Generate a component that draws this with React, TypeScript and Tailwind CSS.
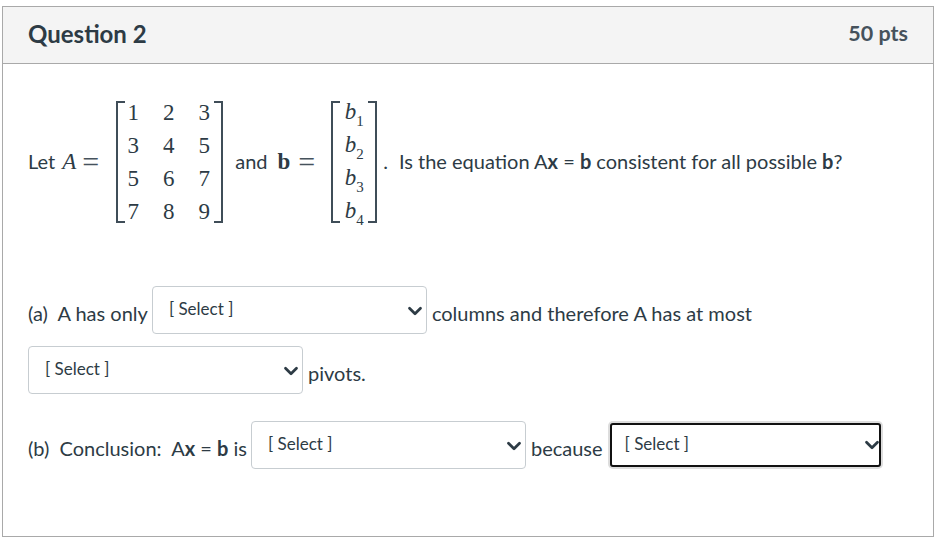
import React from 'react';
import { ChevronDown } from 'lucide-react';

const serif = "font-['Liberation_Serif',serif]";

// crochets de matrice en bordures CSS
const Bracket = ({ side }: { side: 'left' | 'right' }) => (
  <div className={`w-[9px] self-stretch border-y-2 border-[#3f4d58] ${side === 'left' ? 'border-l-2' : 'border-r-2'}`} />
);

const Sub = ({ n }: { n: number }) => <sub className="text-[15px] not-italic align-[-3px] leading-none">{n}</sub>;

const Select = ({ focused }: { focused?: boolean }) => (
  <div className="relative h-[48px] w-[275px] shrink-0">
    <select
      defaultValue=""
      className={`appearance-none bg-white pb-[3px] text-[17px] text-[#2d3b45] font-['Lato',sans-serif] ${
        focused
          ? 'mx-[2px] my-[2px] h-[44px] w-[271px] rounded-[3px] border-[2px] border-[#111111] pl-[13px] outline-none ring-2 ring-[#dddddd]'
          : 'h-[48px] w-[275px] rounded-[4px] border border-[#c7cdd1] pl-[16px]'
      }`}
    >
      <option value="">[ Select ]</option>
    </select>
    <ChevronDown
      size={22}
      strokeWidth={3}
      className={`pointer-events-none absolute text-[#2d3b45] ${focused ? 'right-[0px] top-[13px]' : 'right-[1px] top-[14px]'}`}
    />
  </div>
);

export default function App() {
  const matrix = [
    [1, 2, 3],
    [3, 4, 5],
    [5, 6, 7],
    [7, 8, 9],
  ];

  return (
    <div className="h-[548px] w-[939px] bg-white px-[2px] pt-[6px] font-['Lato',sans-serif] text-[20px] text-[#2d3b45]">
      <div className="h-[531px] w-[932px] border border-[#a9a9a9]">
        <div className="flex h-[57px] items-center justify-between border-b border-[#a9a9a9] bg-[#f4f4f4] pb-[3px] pl-[25px] pr-[25px]">
          <h2 className="text-[24px] font-bold">Question 2</h2>
          <span className="text-[21.5px] font-bold text-[#46525c]">50 pts</span>
        </div>

        <div className="pl-[25px]">
          <div className="mt-[37px] flex h-[122px] items-center">
            <span className="pb-[2px]">Let</span>
            <span className={`${serif} ml-[7px] text-[23px] italic`}>A</span>
            <span className={`${serif} ml-[6px] text-[30px] leading-none text-[#46525c]`}>=</span>
            <div className={`${serif} ml-[17px] flex h-[122px] text-[23px]`}>
              <Bracket side="left" />
              <div className="grid w-[89px] grid-cols-[35.5px_35.5px_35.5px] auto-rows-[33px] content-center justify-center items-center justify-items-center leading-none">
                {matrix.flat().map((v, i) => (
                  <span key={i} className="pr-[2px]">
                    {v}
                  </span>
                ))}
              </div>
              <Bracket side="right" />
            </div>
            <span className="ml-[12px] pb-[2px]">and</span>
            <span className={`${serif} ml-[10px] text-[23px] font-bold`}>b</span>
            <span className={`${serif} ml-[8px] text-[30px] leading-none text-[#46525c]`}>=</span>
            <div className={`${serif} ml-[16px] flex h-[122px] text-[23px]`}>
              <Bracket side="left" />
              <div className="grid w-[28px] auto-rows-[33px] content-center justify-items-center items-center leading-none italic">
                {[1, 2, 3, 4].map((n) => (
                  <span key={n}>
                    b<Sub n={n} />
                  </span>
                ))}
              </div>
              <Bracket side="right" />
            </div>
            <span className="ml-[6px] pb-[2px]">.</span>
            <span className="ml-[11px] pb-[2px]">
              Is the equation A<b>x</b> = <b>b</b> consistent for all possible <b>b</b>?
            </span>
          </div>

          <div className="mt-[63px] flex h-[48px] items-center gap-[5px]">
            <span className="mr-[-1px] whitespace-pre pt-[6px]">(a)  A has only</span>
            <Select />
            <span className="pt-[6px]">columns and therefore A has at most</span>
          </div>

          <div className="mt-[12px] flex h-[48px] items-center gap-[5px]">
            <Select />
            <span className="pt-[6px]">pivots.</span>
          </div>

          <div className="mt-[27px] flex h-[48px] items-center gap-[5px]">
            <span className="mr-[-1px] whitespace-pre pt-[6px]">
              (b)  Conclusion:  A<b>x</b> = <b>b</b> is
            </span>
            <Select />
            <span className="pt-[6px]">because</span>
            <Select focused />
          </div>
        </div>
      </div>
    </div>
  );
}
